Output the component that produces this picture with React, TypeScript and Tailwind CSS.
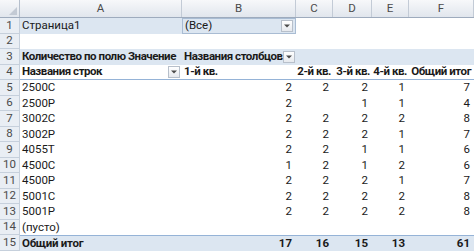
import React from 'react';

// column widths: row header, A, B, C, D, E, F
const W = ['w-[20px]', 'w-[162px]', 'w-[114px]', 'w-[37px]', 'w-[39px]', 'w-[37px]', 'w-[65px]'];

const rows: { name: string; q: (number | null)[]; total: number }[] = [
  { name: '2500C', q: [2, 2, 2, 1], total: 7 },
  { name: '2500P', q: [2, null, 1, 1], total: 4 },
  { name: '3002C', q: [2, 2, 2, 2], total: 8 },
  { name: '3002P', q: [2, 2, 2, 1], total: 7 },
  { name: '4055T', q: [2, 2, 1, 1], total: 6 },
  { name: '4500C', q: [1, 2, 1, 2], total: 6 },
  { name: '4500P', q: [2, 2, 2, 1], total: 7 },
  { name: '5001C', q: [2, 2, 2, 2], total: 8 },
  { name: '5001P', q: [2, 2, 2, 2], total: 8 },
  { name: '(пусто)', q: [null, null, null, null], total: NaN },
];

function Drop() {
  return (
    <span className="flex h-[12px] w-[12px] shrink-0 items-center justify-center border border-[#b7bfca] bg-gradient-to-b from-white to-[#e6e9ee]">
      <svg width="6" height="4" viewBox="0 0 6 4">
        <path d="M0 0.5 L6 0.5 L3 3.5 Z" fill="#4a4a4a" />
      </svg>
    </span>
  );
}

function RowNum({ n }: { n: number }) {
  return (
    <div className={`${W[0]} flex shrink-0 items-center justify-center border-r border-b border-[#c6d0dc] bg-[#e9eef4] font-normal tracking-normal text-[#4b4b4b]`}>
      {n}
    </div>
  );
}

function Row({ n, className = '', children }: { n: number; className?: string; children?: React.ReactNode }) {
  return (
    <div className="flex h-[15.5px] whitespace-nowrap">
      <RowNum n={n} />
      <div className={`flex flex-1 ${className}`}>{children}</div>
    </div>
  );
}

export default function App() {
  const cols = ['A', 'B', 'C', 'D', 'E', 'F'];
  return (
    <div
      className="h-[251px] w-[474px] overflow-hidden bg-white text-[11.5px] leading-none text-[#1a1a1a]"
      style={{ fontFamily: 'Roboto, "Liberation Sans", sans-serif' }}
    >
      {/* column headers */}
      <div className="flex h-[18px] border-b border-[#9eabbd] bg-gradient-to-b from-[#f7f8fa] to-[#e1e6ed] text-[#4b4b4b]">
        <div className={`${W[0]} relative shrink-0 border-r border-[#b5bfcc]`}>
          <svg className="absolute right-[2px] bottom-[2px]" width="8" height="8" viewBox="0 0 8 8">
            <path d="M8 0 L8 8 L0 8 Z" fill="#c3cad4" />
          </svg>
        </div>
        {cols.map((c, i) => (
          <div key={c} className={`${W[i + 1]} flex shrink-0 items-center justify-center border-r border-[#c3cbd6]`}>
            {c}
          </div>
        ))}
      </div>

      {/* 1 */}
      <Row n={1}>
        <div className={`${W[1]} flex items-center bg-[#dce6f1] pl-[2px]`}>Страница1</div>
        <div className={`${W[2]} flex items-center justify-between border border-[#a9bcd3] bg-[#dce6f1] pl-[2px] pr-[2px]`}>
          (Все)
          <Drop />
        </div>
      </Row>

      {/* 2 */}
      <Row n={2} />

      {/* 3 */}
      <Row n={3} className="bg-[#dce6f1] font-bold tracking-[-0.45px]">
        <div className={`${W[1]} flex shrink-0 items-center pl-[2px]`}>Количество по полю Значение</div>
        <div className={`${W[2]} flex shrink-0 items-center justify-between pl-[2px] pr-[2px]`}>
          Названия столбцов
          <Drop />
        </div>
      </Row>

      {/* 4 */}
      <Row n={4} className="border-b border-[#95b3d7] font-bold tracking-[-0.45px]">
        <div className={`${W[1]} flex shrink-0 items-center justify-between pl-[2px] pr-[2px]`}>
          Названия строк
          <Drop />
        </div>
        <div className={`${W[2]} flex shrink-0 items-center pl-[2px]`}>1-й кв.</div>
        <div className={`${W[3]} flex shrink-0 items-center justify-end pr-[2px]`}>2-й кв.</div>
        <div className={`${W[4]} flex shrink-0 items-center justify-end pr-[2px]`}>3-й кв.</div>
        <div className={`${W[5]} flex shrink-0 items-center justify-end pr-[2px]`}>4-й кв.</div>
        <div className={`${W[6]} flex shrink-0 items-center justify-end pr-[3px]`}>Общий итог</div>
      </Row>

      {rows.map((r, i) => (
        <Row key={r.name} n={i + 5}>
          <div className={`${W[1]} flex items-center pl-[2px]`}>{r.name}</div>
          {r.q.map((v, j) => (
            <div key={j} className={`${W[j + 2]} flex items-center justify-end pr-[4px]`}>
              {v ?? ''}
            </div>
          ))}
          <div className={`${W[6]} flex items-center justify-end pr-[4px]`}>{isNaN(r.total) ? '' : r.total}</div>
        </Row>
      ))}

      {/* 15 */}
      <Row n={15} className="border-t border-[#95b3d7] bg-[#dce6f1] font-bold">
        <div className={`${W[1]} flex items-center pl-[2px] tracking-[-0.3px]`}>Общий итог</div>
        <div className={`${W[2]} flex items-center justify-end pr-[4px]`}>17</div>
        <div className={`${W[3]} flex items-center justify-end pr-[4px]`}>16</div>
        <div className={`${W[4]} flex items-center justify-end pr-[4px]`}>15</div>
        <div className={`${W[5]} flex items-center justify-end pr-[4px]`}>13</div>
        <div className={`${W[6]} flex items-center justify-end pr-[4px]`}>61</div>
      </Row>
    </div>
  );
}
